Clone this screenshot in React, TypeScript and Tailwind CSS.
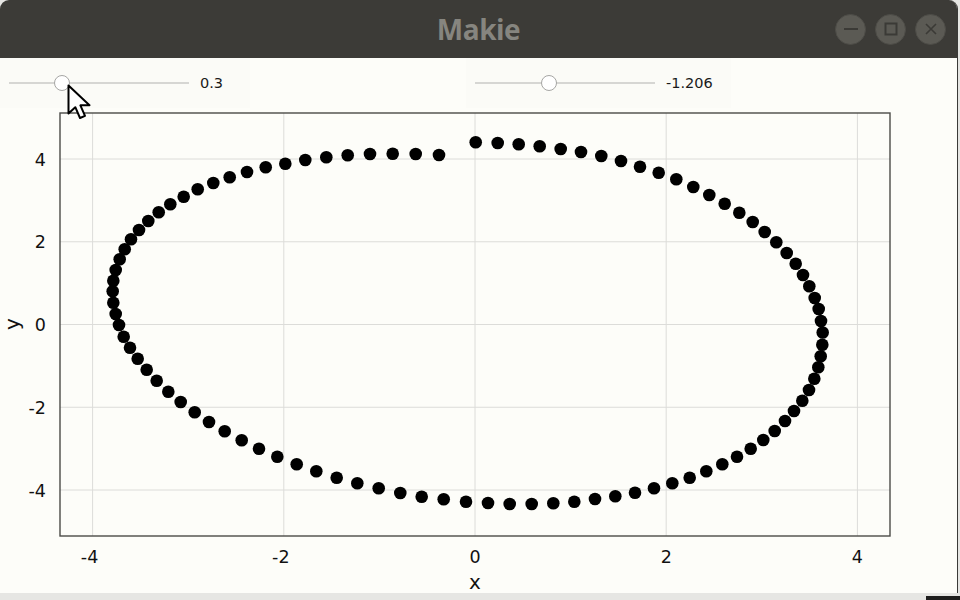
import React from "react";

const DOTS: [number, number][] = [
  [475.7, 142.3], [497.7, 143], [518.7, 144.3], [539.7, 146.3], [560.7, 149], [581, 152], [601.3, 156],
  [621, 161], [640, 166.7], [658.7, 172.7], [676.3, 179.3], [693.3, 187], [709.3, 195], [724.7, 203.7],
  [739.3, 212.7], [752.7, 222], [764.7, 232], [776.3, 242.3], [786.7, 253], [795.7, 263.7], [803, 275],
  [809.3, 286.3], [814.7, 298], [818.7, 309], [821, 321], [822.7, 332.5], [822.3, 344.7], [820.7, 356.3],
  [818.3, 367.3], [814.3, 378.7], [809, 390], [802.3, 400.7], [794, 411], [785, 421], [774.7, 431],
  [763.3, 440], [750.7, 448.7], [737, 456.7], [722.3, 464.3], [706.3, 471.3], [689.7, 477.7], [672.3, 483.3],
  [654, 488.3], [635, 492.7], [615.3, 496.3], [595, 499], [574.3, 501.7], [553.3, 503.3], [531.7, 504],
  [509.7, 504], [488, 503], [466, 501.7], [443.7, 499.3], [421.7, 496.7], [400.3, 493], [378.7, 488.3],
  [357.3, 483.3], [336.7, 477.7], [316.3, 471.3], [296.7, 464.3], [277.3, 456.7], [259, 448.7], [241.7, 440.3],
  [224.7, 431.3], [209, 422], [194.7, 412.3], [180.7, 402], [168.3, 391.7], [156.7, 380.7], [146.7, 369.7],
  [137.7, 358.7], [130, 347.7], [123.7, 336.7], [119, 325], [115.7, 314], [113.3, 302.7], [112.7, 291.3],
  [113.3, 280.7], [115.7, 270], [119.7, 259.3], [124.7, 249.3], [131, 239.3], [139, 230], [148.3, 221],
  [158.7, 212.3], [170.3, 204.3], [183.7, 196.7], [197.7, 189.3], [213.3, 183], [229.7, 177.3], [247, 172],
  [265.7, 167.3], [285.3, 163.7], [305.3, 160], [326.3, 157.3], [347.7, 155.3], [370, 154], [392.7, 153.7],
  [415.7, 154], [439, 155],
];

// data -> pixel
const X_TICKS = [-4, -2, 0, 2, 4];
const Y_TICKS = [4, 2, 0, -2, -4];
const px = (v: number) => 475 + v * 95.6;
const py = (v: number) => 324.5 - v * 41.375;

function WinButton({ kind }: { kind: "min" | "max" | "close" }) {
  return (
    <div className="flex h-[31px] w-[31px] items-center justify-center rounded-full border border-[#4d4c47] bg-[#5b5a54]">
      <svg width="16" height="16" viewBox="0 0 16 16" fill="none" stroke="#3b3a36" strokeWidth="2">
        {kind === "min" && <path d="M1 8h14" />}
        {kind === "max" && <rect x="2.5" y="2.5" width="11" height="11" />}
        {kind === "close" && <path d="M3 3l10 10M13 3L3 13" strokeWidth="1.6" />}
      </svg>
    </div>
  );
}

function Slider({ knob, label, width }: { knob: number; label: string; width: number }) {
  return (
    <div className="flex items-center">
      <div className="relative h-[1.5px] bg-[#d6d6d3]" style={{ width }}>
        <div
          className="absolute top-1/2 h-[16px] w-[16px] -translate-x-1/2 -translate-y-1/2 rounded-full border border-[#a6a6a4] bg-white"
          style={{ left: knob }}
        />
      </div>
      <span className="ml-[11px] font-['DejaVu_Sans',sans-serif] text-[14.5px] leading-none text-[#1a1a1a]">{label}</span>
    </div>
  );
}

function Cursor() {
  return (
    <svg className="absolute left-[67px] top-[26px]" width="26" height="38" viewBox="0 0 26 38">
      <path
        d="M1.5 1.5 L1.5 29.5 L8.3 23.2 L13 34 L18 31.8 L13.4 21.3 L22.5 21.3 Z"
        fill="#ffffff"
        stroke="#000000"
        strokeWidth="2"
        strokeLinejoin="round"
      />
    </svg>
  );
}

function Plot() {
  return (
    <svg width="958" height="485" viewBox="0 108 958 485" className="block">
      {X_TICKS.map((t) => (
        <line key={"gx" + t} x1={px(t)} x2={px(t)} y1={113} y2={536} stroke="#dcdcd9" strokeWidth="1" />
      ))}
      {Y_TICKS.map((t) => (
        <line key={"gy" + t} x1={60} x2={890} y1={py(t)} y2={py(t)} stroke="#dcdcd9" strokeWidth="1" />
      ))}
      <rect x="60" y="113" width="830" height="423" fill="none" stroke="#4a4a48" strokeWidth="1.4" />
      {DOTS.map(([x, y], i) => (
        <circle key={i} cx={x} cy={y} r="6.3" fill="#000" />
      ))}
      <g fontFamily="'DejaVu Sans', sans-serif" fontSize="17.5" fill="#111">
        {Y_TICKS.map((t) => (
          <text key={"ly" + t} x={46} y={py(t) + 6.5} textAnchor="end">
            {t}
          </text>
        ))}
        {X_TICKS.map((t) => (
          <text key={"lx" + t} x={px(t) - (t < 0 ? 3 : 0)} y={563} textAnchor="middle">
            {t}
          </text>
        ))}
      </g>
      <g fontFamily="'DejaVu Sans', sans-serif" fontSize="20" fill="#111">
        <text x={475} y={589} textAnchor="middle">
          x
        </text>
        <text x={19} y={324} textAnchor="middle" transform="rotate(-90 19 324)">
          y
        </text>
      </g>
    </svg>
  );
}

export default function App() {
  return (
    <div className="relative h-[600px] w-[960px] overflow-hidden bg-[#e6e6e3]">
      <div className="flex h-[593px] w-[958px] flex-col overflow-hidden rounded-t-[9px] border-r border-[#3a3a38]">
        <div className="grid h-[58px] shrink-0 grid-cols-[1fr_auto_1fr] items-center bg-[#3c3b37]">
          <div />
          <div className="font-['Open_Sans',sans-serif] text-[28px] font-bold tracking-[-0.5px] text-[#86857f]">Makie</div>
          <div className="flex justify-end gap-[9px] pr-[11px]">
            <WinButton kind="min" />
            <WinButton kind="max" />
            <WinButton kind="close" />
          </div>
        </div>
        <div className="relative flex-1 bg-[#fdfdf9]">
          <div className="flex h-[50px]">
            <div className="flex w-[250px] items-center bg-[#fbfbf7] pl-[9px]">
              <Slider knob={53} label="0.3" width={180} />
            </div>
            <div className="ml-[216px] flex w-[265px] items-center bg-[#fbfbf7] pl-[9px]">
              <Slider knob={74} label="-1.206" width={180} />
            </div>
          </div>
          <Plot />
          <Cursor />
        </div>
      </div>
      <div className="absolute bottom-0 right-0 h-[4px] w-[34px] bg-[#1e1e1d]" />
    </div>
  );
}
